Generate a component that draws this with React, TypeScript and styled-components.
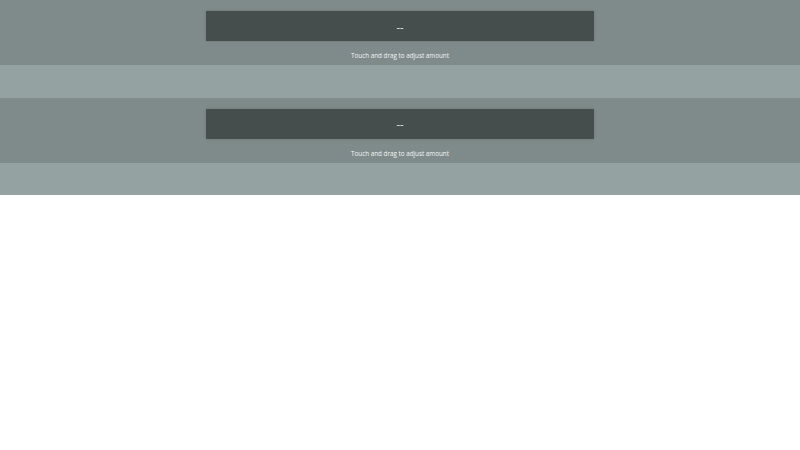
import React from "react";
import styled, { createGlobalStyle } from "styled-components";

const GlobalStyle = createGlobalStyle`
  body {
    margin: 0;
    background: #ffffff;
    font-family: "Open Sans", "Noto Sans", sans-serif;
  }
`;

type SliderProps = {
  value: string;
  hint: string;
};

const AmountSlider = (props: SliderProps) => {
  return (
    <>
      <Panel>
        <Track>{props.value}</Track>
        <Hint>{props.hint}</Hint>
      </Panel>
      <Spacer />
    </>
  );
};

export default function App() {
  return (
    <>
      <GlobalStyle />
      <AmountSlider value="--" hint="Touch and drag to adjust amount" />
      <AmountSlider value="--" hint="Touch and drag to adjust amount" />
    </>
  );
}

const Panel = styled.div`
  background-color: #7f8b8a;
  height: 65px;
  box-sizing: border-box;
  padding-top: 11px;
  display: flex;
  flex-direction: column;
  align-items: center;
`;

const Track = styled.div`
  width: 388px;
  height: 30px;
  flex-shrink: 0;
  background-color: #454e4d;
  color: #eef2f1;
  font-size: 11px;
  display: flex;
  align-items: center;
  justify-content: center;
  box-shadow: 0 0 3px rgba(0, 0, 0, 0.15);
`;

const Hint = styled.p`
  margin: 9px 0 0;
  color: #f4f6f5;
  font-size: 6.3px;
  line-height: 11px;
`;

const Spacer = styled.div`
  background-color: #94a3a2;
  height: 32.5px;
`;
